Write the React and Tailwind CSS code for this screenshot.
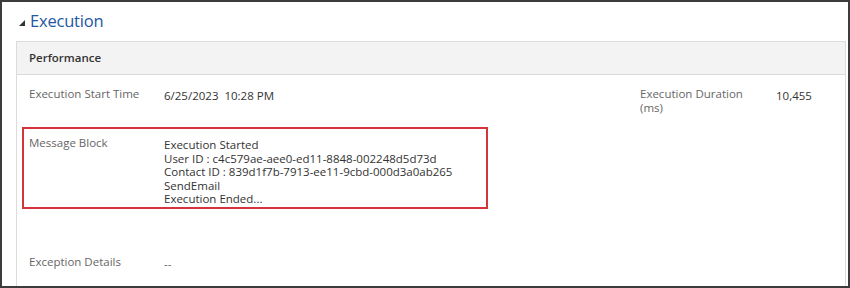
export default function App() {
  const font = { fontFamily: '"Open Sans", "Noto Sans", sans-serif' };
  return (
    <div className="w-[850px] h-[288px] border-2 border-[#3c3c3c] bg-white overflow-hidden" style={font}>
      <div className="flex items-center h-[39px] pl-[17px]">
        <svg width="6" height="6" viewBox="0 0 6 6" className="mt-[3px] mr-[5px]">
          <polygon points="6,0 6,6 0,6" fill="#333" />
        </svg>
        <span className="text-[16.5px] leading-none text-[#2356a3] tracking-[-0.2px] -mt-[1px]">Execution</span>
      </div>
      <div className="ml-[14px] mr-[2px] h-[245px] border border-[#dcdcdc] border-b-0">
        <div className="h-[33px] bg-[#f3f3f3] border-b border-[#dadada] flex items-center pl-[12px]">
          <span className="text-[11.5px] font-semibold text-[#333]">Performance</span>
        </div>
        <div className="flex pt-[12px] pl-[12px] text-[11.5px] leading-[14px]">
          <div className="w-[135px] text-[#666]">Execution Start Time</div>
          <div className="w-[476px] text-[#333] pt-[2px] whitespace-pre">6/25/2023  10:28 PM</div>
          <div className="w-[136px] text-[#666] pr-[30px]">Execution Duration (ms)</div>
          <div className="text-[#333] pt-[2px]">10,455</div>
        </div>
        <div className="mt-[12px] ml-[5px] w-[466px] h-[82px] border-2 border-[#d4343c] flex pl-[5px] pt-[7px] text-[11.5px] leading-[13.5px]">
          <div className="w-[135px] text-[#666]">Message Block</div>
          <div className="text-[#333] pt-[2px]">
            <div>Execution Started</div>
            <div>User ID : c4c579ae-aee0-ed11-8848-002248d5d73d</div>
            <div>Contact ID : 839d1f7b-7913-ee11-9cbd-000d3a0ab265</div>
            <div>SendEmail</div>
            <div>Execution Ended...</div>
          </div>
        </div>
        <div className="flex pl-[12px] mt-[46px] text-[11.5px] leading-[14px]">
          <div className="w-[135px] text-[#666]">Exception Details</div>
          <div className="text-[#666] pt-[2px]">--</div>
        </div>
      </div>
    </div>
  );
}
